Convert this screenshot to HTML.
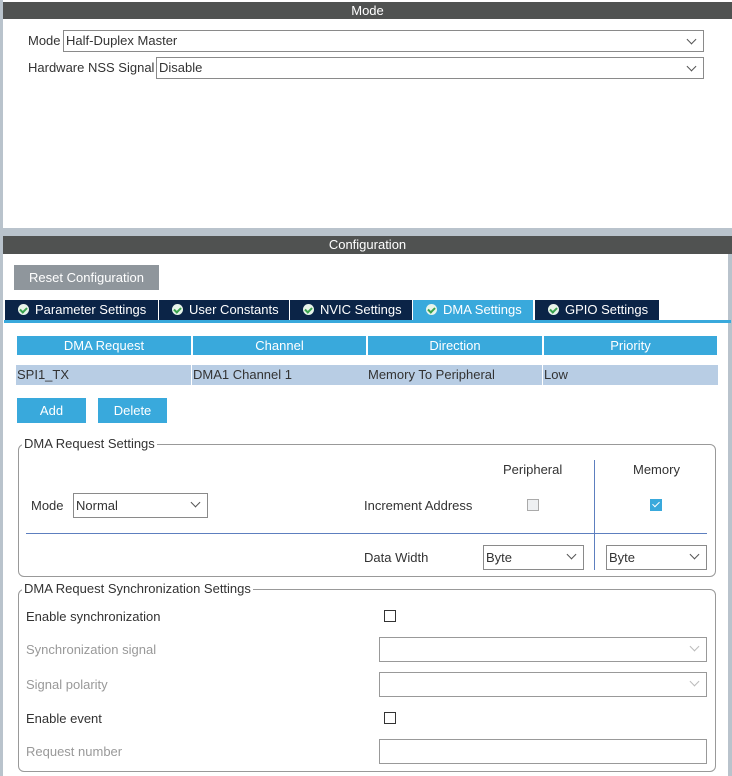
<!DOCTYPE html>
<html><head><style>
*{margin:0;padding:0;box-sizing:border-box}
body{width:732px;height:776px;background:#b9c3cc;font-family:"Liberation Sans",Arial,sans-serif;font-size:13px;color:#333;position:relative;overflow:hidden}
.a{position:absolute}
.bar{background:#505251;color:#fff;text-align:center;font-size:13px;line-height:17px}
.sel{position:absolute;border:1px solid #8a8a8a;background:#fff;padding-left:2px;line-height:20px;height:22px}
.sel:after{content:"";position:absolute;right:8px;top:5px;width:6px;height:6px;border-right:1px solid #555;border-bottom:1px solid #555;transform:rotate(45deg)}
.sel.dis:after{border-color:#bbb}
.tab{position:absolute;top:300px;height:20px;background:#0b2447;color:#fff;line-height:20px;font-size:13px;padding-left:13px}
.ck{display:inline-block;width:11px;height:11px;border-radius:50%;background:#55b96a;vertical-align:-1px;margin-right:6px;position:relative;background:#e8f4ea}
.ck:after{content:"";position:absolute;left:3px;top:2px;width:3px;height:5px;border-right:2px solid #3aa34e;border-bottom:2px solid #3aa34e;transform:rotate(45deg)}
.hd{position:absolute;top:336px;height:19px;background:#39a9dc;color:#fff;text-align:center;line-height:19px}
.rw{position:absolute;top:365px;height:20px;background:#b8cde4;line-height:20px;padding-left:1px}
.btn{position:absolute;background:#39a9dc;color:#fff;text-align:center;line-height:25px;height:25px}
.box{position:absolute;border:1px solid #999;border-radius:6px}
.leg{position:absolute;background:#fff;padding:0 2px;line-height:14px}
.cb{position:absolute;width:12px;height:12px;border:1px solid #333;background:#fff}
.g{color:#999}
</style></head><body>
<div class="a" style="left:3px;top:0;width:729px;height:228px;background:#fff"></div>
<div class="a bar" style="left:3px;top:2px;width:729px">Mode</div>
<div class="a" style="left:28px;top:33px">Mode</div>
<div class="sel" style="left:63px;top:30px;width:641px">Half-Duplex Master</div>
<div class="a" style="left:28px;top:60px">Hardware NSS Signal</div>
<div class="sel" style="left:156px;top:57px;width:548px">Disable</div>

<div class="a" style="left:3px;top:236px;width:725px;height:540px;background:#fff"></div>
<div class="a bar" style="left:3px;top:236px;width:729px;height:18px;line-height:18px">Configuration</div>
<div class="btn" style="left:14px;top:265px;width:145px;background:#8f969c;line-height:26px">Reset Configuration</div>
<div class="tab" style="left:5px;width:153px"><span class="ck"></span>Parameter Settings</div>
<div class="tab" style="left:159px;width:130px"><span class="ck"></span>User Constants</div>
<div class="tab" style="left:290px;width:122px"><span class="ck"></span>NVIC Settings</div>
<div class="tab" style="left:413px;width:120px;background:#39a9dc"><span class="ck"></span>DMA Settings</div>
<div class="tab" style="left:535px;width:124px"><span class="ck"></span>GPIO Settings</div>
<div class="a" style="left:4px;top:320px;width:727px;height:3px;background:#39a9dc"></div>

<div class="hd" style="left:17px;width:174px">DMA Request</div>
<div class="hd" style="left:193px;width:173px">Channel</div>
<div class="hd" style="left:368px;width:174px">Direction</div>
<div class="hd" style="left:544px;width:173px">Priority</div>
<div class="rw" style="left:16px;width:175px">SPI1_TX</div>
<div class="rw" style="left:192px;width:175px">DMA1 Channel 1</div>
<div class="rw" style="left:367px;width:175px">Memory To Peripheral</div>
<div class="rw" style="left:543px;width:175px">Low</div>
<div class="btn" style="left:17px;top:398px;width:69px">Add</div>
<div class="btn" style="left:98px;top:398px;width:69px">Delete</div>

<div class="box" style="left:18px;top:444px;width:698px;height:133px"></div>
<div class="leg" style="left:22px;top:437px">DMA Request Settings</div>
<div class="a" style="left:503px;top:462px">Peripheral</div>
<div class="a" style="left:633px;top:462px">Memory</div>
<div class="a" style="left:594px;top:460px;width:1px;height:110px;background:#5d7fbf"></div>
<div class="a" style="left:26px;top:533px;width:681px;height:1px;background:#5d7fbf"></div>
<div class="a" style="left:31px;top:498px">Mode</div>
<div class="sel" style="left:73px;top:493px;width:135px;height:25px;line-height:23px">Normal</div>
<div class="a" style="left:364px;top:498px">Increment Address</div>
<div class="a" style="left:527px;top:499px;width:12px;height:12px;border:1px solid #aaa;background:#eef0f2"></div>
<div class="a" style="left:650px;top:499px;width:12px;height:12px;background:#39a9dc"><div class="a" style="left:4px;top:1px;width:4px;height:7px;border-right:1.5px solid #fff;border-bottom:1.5px solid #fff;transform:rotate(45deg)"></div></div>
<div class="a" style="left:364px;top:550px">Data Width</div>
<div class="sel" style="left:483px;top:545px;width:101px;height:25px;line-height:23px">Byte</div>
<div class="sel" style="left:606px;top:545px;width:101px;height:25px;line-height:23px">Byte</div>

<div class="box" style="left:18px;top:589px;width:698px;height:183px"></div>
<div class="leg" style="left:22px;top:582px">DMA Request Synchronization Settings</div>
<div class="a" style="left:26px;top:609px">Enable synchronization</div>
<div class="cb" style="left:384px;top:610px"></div>
<div class="a g" style="left:26px;top:642px">Synchronization signal</div>
<div class="sel dis" style="left:379px;top:637px;width:328px;height:25px;border-color:#999"></div>
<div class="a g" style="left:26px;top:677px">Signal polarity</div>
<div class="sel dis" style="left:379px;top:672px;width:328px;height:25px;border-color:#999"></div>
<div class="a" style="left:26px;top:711px">Enable event</div>
<div class="cb" style="left:384px;top:712px"></div>
<div class="a g" style="left:26px;top:744px">Request number</div>
<div class="a" style="left:379px;top:739px;width:328px;height:25px;border:1px solid #999"></div>
</body></html>
